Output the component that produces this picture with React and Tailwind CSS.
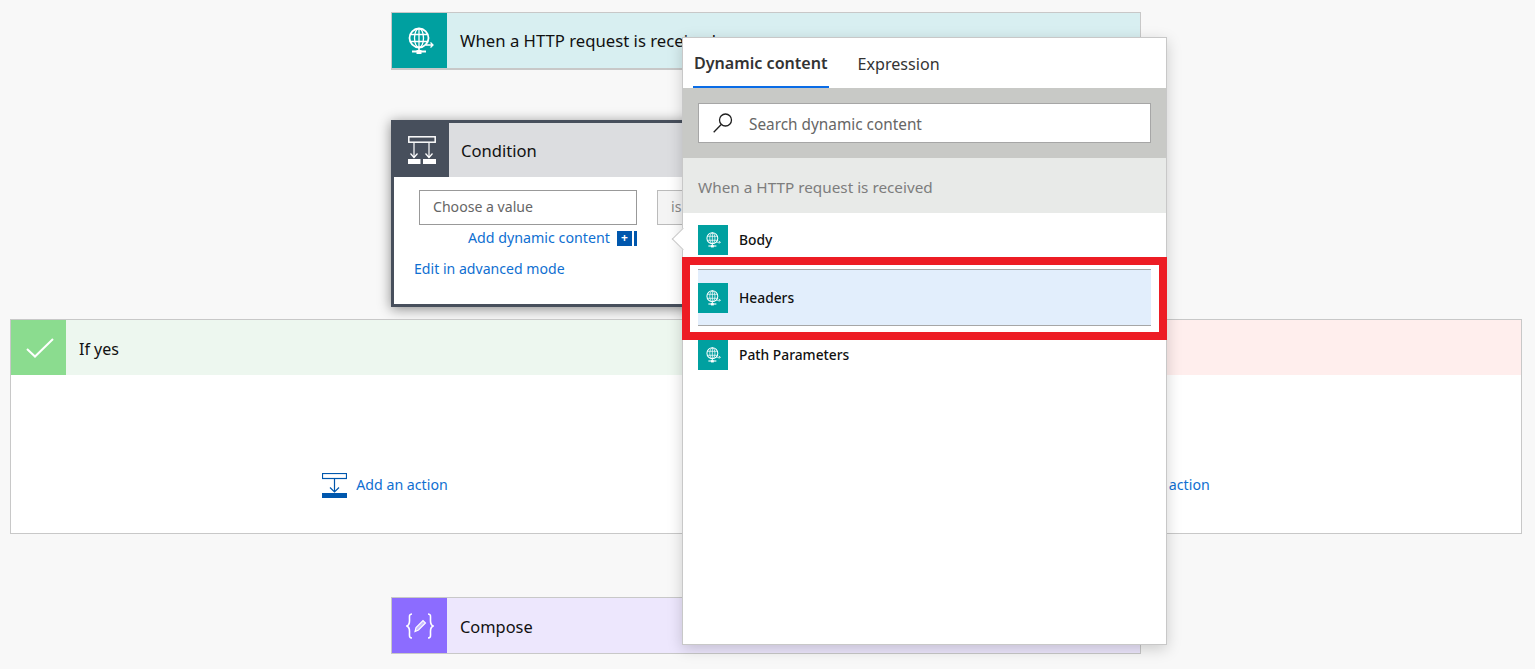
import React from 'react';

function GlobeIcon({ className }) {
  return (
    <svg viewBox="0 0 26 28" className={className} fill="none" stroke="white" strokeWidth="1.3">
      {/* globe */}
      <circle cx="11" cy="11" r="9.5" strokeWidth="1.8" />
      <ellipse cx="11" cy="11" rx="4.5" ry="9.5" />
      <path d="M2 7.5h18M2 14.5h18M11 1.5v19" />
      {/* stand */}
      <path d="M11 20.5v3" strokeWidth="1.6" />
      <path d="M4 24.5h14" strokeWidth="2" />
      <rect x="8.5" y="23" width="5" height="4" fill="white" stroke="none" />
      {/* arrow */}
      <path d="M18 18h7M22.5 15.5l2.5 2.5-2.5 2.5" />
    </svg>
  );
}

function ConditionIcon() {
  return (
    <svg viewBox="0 0 28 28" className="w-[28px] h-[28px]" fill="none" stroke="white">
      <rect x="0.8" y="0.8" width="26.4" height="5.4" strokeWidth="1.5" />
      <path d="M6 6.5v15M21 6.5v15" strokeWidth="1.2" />
      <path d="M2.500 17.500l3.500 4 3.500-4M17.500 17.500l3.500 4 3.500-4" strokeWidth="1.2" />
      <rect x="0" y="23" width="12.500" height="5" fill="white" stroke="none" />
      <rect x="15" y="23" width="13" height="5" fill="white" stroke="none" />
    </svg>
  );
}

function CheckIcon() {
  return (
    <svg viewBox="0 0 28 20" className="w-[28px] h-[20px]" fill="none" stroke="white" strokeWidth="2">
      <path d="M1 11l8 7.5L27 1" />
    </svg>
  );
}

function ComposeIcon() {
  return (
    <svg viewBox="0 0 28 26" className="w-[28px] h-[26px]" fill="none" stroke="white" strokeWidth="1.6">
      <path d="M6 1C3 1 3.5 3 3.5 6S4 11.5 1 13c3 1.5 2.5 4 2.5 7S3 25 6 25" />
      <path d="M22 1c3 0 2.500 2 2.500 5S24 11.500 27 13c-3 1.500-2.500 4-2.500 7s.5 5-2.500 5" />
      <path d="M9 18.500l1-4L17 7.500l2.500 2.500-7 7z" strokeWidth="1.1" fill="#c9bcff" />
    </svg>
  );
}

function AddActionIcon() {
  return (
    <svg viewBox="0 0 25 25" className="w-[25px] h-[25px]" fill="none" stroke="#0057ad">
      <rect x="0.500" y="0.500" width="24" height="5" strokeWidth="1.200" />
      <path d="M12.500 6v12.500M8 14.500l4.500 4.500 4.500-4.500" strokeWidth="1.200" />
      <rect x="0" y="20" width="25" height="5" fill="#0057ad" stroke="none" />
    </svg>
  );
}

function SearchIcon() {
  return (
    <svg viewBox="0 0 20 20" className="w-[20px] h-[20px]" fill="none" stroke="#1f1f1f" strokeWidth="1.300">
      <circle cx="12.500" cy="7" r="6" />
      <path d="M8.200 11.500L0.700 19.300" />
    </svg>
  );
}

function AddAction() {
  return (
    <div className="flex-1 flex items-end justify-center pb-[35px] bg-white">
      <div className="flex items-center gap-[9px]">
        <AddActionIcon />
        <span className="text-[14.2px] leading-[20px] pb-[2px] text-[#0f6fd1]">Add an action</span>
      </div>
    </div>
  );
}

function DynamicRow({ label, selected, first }) {
  let rowClass = 'flex items-center h-[30px] mx-[15px] mt-[14px]';
  if (first) rowClass = 'flex items-center h-[30px] mx-[15px] mt-[12px]';
  if (selected) rowClass = 'flex items-center h-[57px] mt-[14px] mx-[15px] bg-[#e2eefc] border-y border-[#a6a6a6]';
  return (
    <div className={rowClass}>
      <div className="w-[30px] h-[30px] bg-[#00a0a0] flex items-center justify-center shrink-0">
        <GlobeIcon className="w-[15px] h-[16px]" />
      </div>
      <span className={selected ? 'ml-[11px] pt-[2px] text-[13.8px] font-medium text-[#111]' : 'ml-[11px] text-[13.8px] font-medium text-[#111]'}>
        {label}
      </span>
    </div>
  );
}

function DynamicPanel() {
  return (
    <div className="absolute left-[682px] top-[37px] w-[485px] h-[608px] bg-white border border-[#c8c8c8] shadow-[0_4px_14px_rgba(0,0,0,0.18)] z-10">
      {/* callout arrow pointing at the add dynamic content link */}
      <div className="absolute -left-[8px] top-[193px] w-[16px] h-[16px] rotate-45 bg-white border-l border-b border-[#c8c8c8]" />
      <div className="flex h-[50px] pl-[10px] gap-[29px]">
        <div className="h-[50px] flex items-center font-semibold text-[16.1px] text-[#333] border-b-2 border-[#0a6ce6] px-[1px] pt-[2px]">
          Dynamic content
        </div>
        <div className="h-[50px] flex items-center text-[16.1px] text-[#333] pt-[2px]">Expression</div>
      </div>
      <div className="h-[70px] bg-[#c8c9c6] px-[15px] pt-[15px]">
        <div className="h-[40px] bg-white border border-[#a6a6a6] flex items-center pl-[14px] gap-[16px]">
          <SearchIcon />
          <span className="text-[15.35px] text-[#666] pt-[4px]">Search dynamic content</span>
        </div>
      </div>
      <div className="h-[55px] bg-[#e8eae8] pl-[15px] pt-[3px] flex items-center text-[15.3px] text-[#7d7d7d]">
        When a HTTP request is received
      </div>
      <DynamicRow label="Body" first />
      <DynamicRow label="Headers" selected />
      <DynamicRow label="Path Parameters" />
      {/* red highlight drawn over the screenshot */}
      <div className="absolute -left-px top-[219px] w-[485px] h-[83px] border-[8px] border-[#ed1c24]" />
    </div>
  );
}

export default function App() {
  return (
    <div
      className="relative w-full h-[669px] overflow-hidden bg-[#f8f8f8] pt-[12px] text-[#111]"
      style={{ fontFamily: '"Noto Sans", sans-serif' }}
    >
      {/* trigger */}
      <div className="ml-[391px] w-[750px] h-[58px] flex border border-[#c8c8c8] border-b-2 bg-[#d8eff1]">
        <div className="w-[55px] bg-[#00a0a0] flex items-center justify-center pl-[2px]">
          <GlobeIcon className="w-[26px] h-[28px]" />
        </div>
        <div className="ml-[13px] flex items-center text-[16.7px]">When a HTTP request is received</div>
      </div>

      {/* condition */}
      <div className="ml-[391px] mt-[50px] w-[750px] h-[187px] border-[3px] border-[#474f5c] bg-white shadow-[0_2px_12px_rgba(0,0,0,0.45)]">
        <div className="flex h-[54px] bg-[#dcdde0]">
          <div className="w-[55px] bg-[#474f5c] flex items-center justify-center">
            <ConditionIcon />
          </div>
          <div className="ml-[12px] pt-[2px] flex items-center text-[16.6px]">Condition</div>
        </div>
        <div className="pl-[25px] pt-[13px]">
          <div className="flex gap-[20px]">
            <div className="w-[218px] h-[35px] border border-[#999] flex items-center pl-[13px] pb-[2px] text-[14.1px] text-[#666]">
              Choose a value
            </div>
            <div className="w-[200px] h-[35px] border border-[#bbb] bg-[#f4f4f4] flex items-center pl-[13px] pb-[2px] text-[14.1px] text-[#888]">
              is equal to
            </div>
          </div>
          <div className="w-[218px] flex items-center justify-end gap-[7px] mt-[3px] h-[20px]">
            <span className="text-[14.25px] text-[#0f6fd1]">Add dynamic content</span>
            <div className="flex gap-[2px]">
              <div className="w-[15px] h-[15px] bg-[#0057ad] flex items-center justify-center text-white text-[12px] font-bold leading-none">
                +
              </div>
              <div className="w-[3px] h-[15px] bg-[#0057ad]" />
            </div>
          </div>
          <div className="mt-[10px] -ml-[5px] text-[14.1px] text-[#0f6fd1]">Edit in advanced mode</div>
        </div>
      </div>

      {/* branches */}
      <div className="ml-[10px] mt-[12px] w-[1512px] h-[215px] flex justify-between">
        <div className="w-[750px] flex flex-col border border-[#c8c8c8]">
          <div className="h-[55px] flex bg-[#edf7ef]">
            <div className="w-[55px] bg-[#8bdc8f] flex items-center justify-center pl-[3px]">
              <CheckIcon />
            </div>
            <div className="ml-[13px] pt-[2px] flex items-center text-[16px]">If yes</div>
          </div>
          <AddAction />
        </div>
        <div className="w-[750px] flex flex-col border border-[#c8c8c8]">
          <div className="h-[55px] bg-[#ffeeed]" />
          <AddAction />
        </div>
      </div>

      {/* compose */}
      <div className="ml-[391px] mt-[63px] w-[750px] h-[57px] flex border border-[#c8c8c8] bg-[#ede7fd]">
        <div className="w-[55px] bg-[#8c6cff] flex items-center justify-center">
          <ComposeIcon />
        </div>
        <div className="ml-[13px] pt-[4px] flex items-center text-[16.4px]">Compose</div>
      </div>

      <DynamicPanel />
    </div>
  );
}
